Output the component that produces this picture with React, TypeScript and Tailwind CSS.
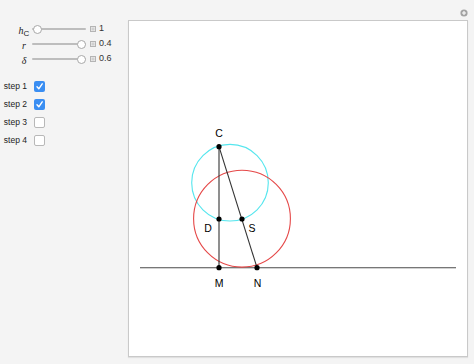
import React from 'react'

const sliders = [
  { key: 'h', value: '1', pos: 0 },
  { key: 'r', value: '0.4', pos: 1 },
  { key: 'd', value: '0.6', pos: 1 },
]

const steps = [
  { label: 'step 1', checked: true },
  { label: 'step 2', checked: true },
  { label: 'step 3', checked: false },
  { label: 'step 4', checked: false },
]

const SliderLabel = ({ k }: { k: string }) => {
  if (k === 'h')
    return (
      <span className="italic font-['Liberation_Serif',serif] text-[10px]">
        h
        <span className="not-italic font-['Liberation_Sans',sans-serif] text-[8px] relative top-[2px]">C</span>
      </span>
    )
  if (k === 'r') return <span className="italic font-['Liberation_Serif',serif] text-[10px]">r</span>
  return <span className="italic font-['Liberation_Serif',serif] text-[10px]">δ</span>
}

const PlusBox = () => (
  <svg width="6" height="6" viewBox="0 0 6 6" className="shrink-0">
    <rect x="0.5" y="0.5" width="5" height="5" fill="#e6e6e6" stroke="#b4b4b4" strokeWidth="1" />
    <path d="M3 1.5v3M1.5 3h3" stroke="#c8c8c8" strokeWidth="1" />
  </svg>
)

const Slider = ({ pos }: { pos: number }) => (
  <div className="relative w-[54px] h-[10px] flex items-center">
    <div className="h-[2px] w-full bg-[#bdbdbd] rounded" />
    <div
      className={
        'absolute top-[0.5px] w-[9px] h-[9px] rounded-full bg-white border border-[#a8a8a8] ' +
        (pos === 0 ? 'left-[0.5px]' : 'right-[0px]')
      }
    />
  </div>
)

const Check = ({ checked }: { checked: boolean }) =>
  checked ? (
    <div className="w-[11px] h-[11px] rounded-[2px] bg-[#3a8ef2] flex items-center justify-center">
      <svg width="9" height="9" viewBox="0 0 9 9">
        <path d="M2 4.8l1.8 2L7.2 1.8" fill="none" stroke="white" strokeWidth="1.4" strokeLinecap="round" strokeLinejoin="round" />
      </svg>
    </div>
  ) : (
    <div className="w-[11px] h-[11px] rounded-[2px] bg-white border border-[#b8b8b8]" />
  )

const Diagram = () => (
  <svg width="100%" height="100%" viewBox="0 0 338 335">
    <g transform="translate(-129,-21)">
      <line x1="140" y1="267.7" x2="456" y2="267.7" stroke="#4a4a4a" strokeWidth="1.1" />
      <circle cx="230" cy="182.7" r="38.3" fill="none" stroke="#55e6ee" strokeWidth="1.1" />
      <circle cx="242" cy="218.7" r="48.4" fill="none" stroke="#e54848" strokeWidth="1.1" />
      <line x1="219" y1="146.7" x2="219" y2="267.7" stroke="#333" strokeWidth="1.1" />
      <line x1="219" y1="146.7" x2="257" y2="267.7" stroke="#333" strokeWidth="1.1" />
      {[
        [219, 146.7],
        [219, 219],
        [242, 219],
        [219, 267.7],
        [257, 267.7],
      ].map(([x, y], i) => (
        <circle key={i} cx={x} cy={y} r="2.6" fill="#000" />
      ))}
      <g fontFamily="'Liberation Sans', Arial, sans-serif" fontSize="10.5" fill="#000" textAnchor="middle">
        <text x="219" y="137">C</text>
        <text x="208" y="232">D</text>
        <text x="252" y="232">S</text>
        <text x="219" y="286.5">M</text>
        <text x="257.5" y="286.5">N</text>
      </g>
    </g>
  </svg>
)

export default function App() {
  return (
    <div className="relative w-[474px] h-[364px] bg-[#f4f4f4] flex font-['Liberation_Sans',Arial,sans-serif] text-[#222] overflow-hidden">
      {/* controls */}
      <div className="w-[128px] shrink-0 pt-[21.5px]">
        {sliders.map((s) => (
          <div key={s.key} className="flex items-center h-[15px]">
            <div className="w-[16px] ml-[16px] text-center leading-none">
              <SliderLabel k={s.key} />
            </div>
            <Slider pos={s.pos} />
            <div className="ml-[4px]">
              <PlusBox />
            </div>
            <span className="ml-[3px] text-[9px] text-[#333]">{s.value}</span>
          </div>
        ))}

        <div className="mt-[10.5px]">
          {steps.map((s) => (
            <div key={s.label} className="flex items-center h-[18px]">
              <span className="w-[27px] text-right text-[8.5px] text-[#222]">{s.label}</span>
              <div className="ml-[6.5px]">
                <Check checked={s.checked} />
              </div>
            </div>
          ))}
        </div>
      </div>

      {/* graphics panel */}
      <div className="mt-[20px] w-[340px] h-[337px] bg-white border border-[#c9c9c9] shadow-[0_1px_1px_rgba(0,0,0,0.08)]">
        <Diagram />
      </div>

      {/* options button */}
      <svg className="absolute left-[460px] top-[8.5px]" width="8" height="8" viewBox="0 0 8 8">
        <circle cx="4" cy="4" r="3.6" fill="#a3a3a3" />
        <path d="M4 2v4M2 4h4" stroke="white" strokeWidth="1.1" />
      </svg>
    </div>
  )
}
